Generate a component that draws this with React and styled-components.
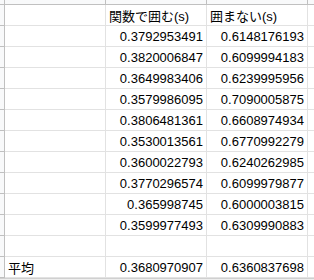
import React from 'react'
import styled, { createGlobalStyle } from 'styled-components'

const GlobalStyle = createGlobalStyle`
  html, body {
    margin: 0;
    padding: 0;
    background: #fff;
    overflow: hidden;
  }
`

const rows = [
  ['0.3792953491', '0.6148176193'],
  ['0.3820006847', '0.6099994183'],
  ['0.3649983406', '0.6239995956'],
  ['0.3579986095', '0.7090005875'],
  ['0.3806481361', '0.6608974934'],
  ['0.3530013561', '0.6770992279'],
  ['0.3600022793', '0.6240262985'],
  ['0.3770296574', '0.6099979877'],
  ['0.365998745', '0.6000003815'],
  ['0.3599977493', '0.6309990883'],
]

const Sheet = styled.div`
  display: grid;
  grid-template-columns: 5px 101px 101px 101px 1fr;
  grid-template-rows: 5px repeat(13, 21px) 1fr;
  width: 314px;
  height: 280px;
  font-family: "Liberation Sans", Arial, "Noto Sans CJK JP", sans-serif;
  font-size: 13px;
  color: #000;
  box-sizing: border-box;
`

const Corner = styled.div`
  background: #f8f9fa;
  border-right: 1px solid #c0c0c0;
  border-bottom: 1px solid #c0c0c0;
`

const ColHead = styled.div`
  background: #f8f9fa;
  border-bottom: 1px solid #c0c0c0;
  border-right: ${p => (p.$last ? 'none' : '1px solid #c0c0c0')};
`

const RowHead = styled.div`
  background: #f8f9fa;
  border-right: 1px solid #c0c0c0;
  border-bottom: 1px solid #c0c0c0;
`

const Cell = styled.div`
  display: flex;
  align-items: center;
  justify-content: ${p => (p.$num ? 'flex-end' : 'flex-start')};
  padding: 1px 3px 0 3px;
  border-right: ${p => (p.$last ? 'none' : '1px solid #e2e2e2')};
  border-bottom: 1px solid #e2e2e2;
  white-space: nowrap;
  overflow: hidden;
  box-sizing: border-box;
`

const Footer = styled.div`
  grid-column: 1 / -1;
  background: #eeeeee;
  border-top: 1px solid #d0d0d0;
`

const Row = ({ label, a, b, num }) => (
  <>
    <RowHead />
    <Cell>{label}</Cell>
    <Cell $num={num}>{a}</Cell>
    <Cell $num={num}>{b}</Cell>
    <Cell $last />
  </>
)

const App = () => (
  <>
    <GlobalStyle />
    <Sheet>
      <Corner />
      <ColHead />
      <ColHead />
      <ColHead />
      <ColHead $last />

      <Row a="関数で囲む(s)" b="囲まない(s)" />
      {rows.map((r, i) => (
        <Row key={i} a={r[0]} b={r[1]} num />
      ))}
      <Row />
      <Row label="平均" a="0.3680970907" b="0.6360837698" num />
      <Footer />
    </Sheet>
  </>
)

export default App
